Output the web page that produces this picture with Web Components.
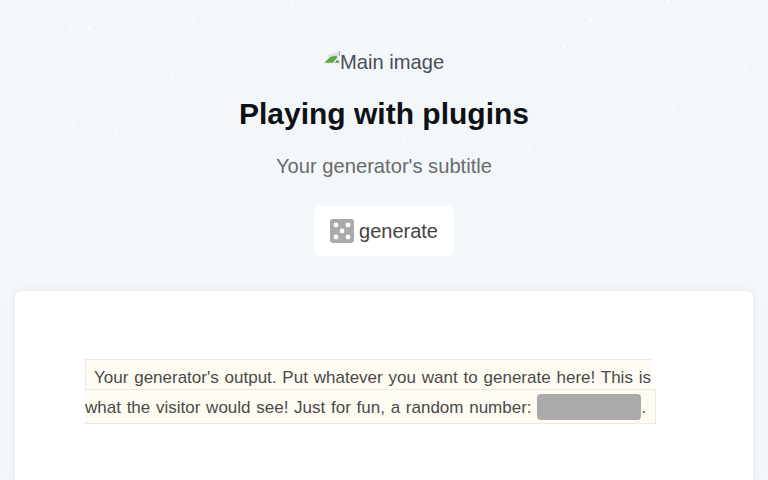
<!DOCTYPE html>
<html lang="en">
<head>
<meta charset="utf-8">
<title>Playing with plugins</title>
<style>
  html, body { margin: 0; height: 480px; overflow: hidden; background: #f3f7fa; }
  body { font-family: "Liberation Sans", Arial, sans-serif; color: #444; }
  .last-line { word-spacing: 1px; white-space: nowrap; }
</style>
</head>
<body>
<snow-field></snow-field>
<gen-hero heading="Playing with plugins" subtitle="Your generator's subtitle" alt="Main image">
  <dice-button>generate</dice-button>
</gen-hero>
<output-card>
  Your generator's output. Put whatever you want to generate here! This is <span class="last-line">what the visitor would see! Just for fun, a random number: <blur-slot></blur-slot>.</span>
</output-card>

<script>
// snow flakes sit on a free canvas behind the page
const flakes = [
  [53,14],[51,34],[71,29],[89,28],[193,22],[173,62],[162,75],[172,77],[235,58],[202,96],
  [22,82],[75,91],[123,109],[43,116],[73,126],[116,132],[146,130],[163,137],[45,150],
  [668,1],[696,9],[591,20],[531,43],[564,47],[525,54],[739,61],[745,70],[512,86],[673,106],
  [565,118],[614,143],[529,146],[292,2],[422,6],[470,38],[474,68],[453,84],[404,138],[413,50]
];

class SnowField extends HTMLElement {
  constructor() {
    super();
    this.attachShadow({ mode: 'open' });
  }
  connectedCallback() {
    const dots = flakes.map(([x, y]) => `<circle cx="${x}" cy="${y}" r="1.3"/>`).join('');
    this.shadowRoot.innerHTML = `
      <style>
        :host { position: absolute; left: 0; top: 0; width: 768px; height: 480px; z-index: 0; }
        svg { display: block; fill: #fff; }
      </style>
      <svg width="768" height="480" viewBox="0 0 768 480">${dots}</svg>
    `;
  }
}

class GenHero extends HTMLElement {
  constructor() {
    super();
    this.attachShadow({ mode: 'open' });
  }
  connectedCallback() {
    const heading = this.getAttribute('heading') || '';
    const subtitle = this.getAttribute('subtitle') || '';
    const alt = this.getAttribute('alt') || '';
    this.shadowRoot.innerHTML = `
      <style>
        :host {
          display: flex;
          flex-direction: column;
          align-items: center;
          position: relative;
          z-index: 1;
          padding-top: 50px;
        }
        .image {
          display: flex;
          width: 120px;
          height: 24px;
          font-size: 20.16px;
          line-height: 24px;
          color: #495057;
          white-space: nowrap;
          overflow: hidden;
        }
        .image svg { flex: none; display: block; margin-top: 1px; }
        h1 {
          margin: 20px 0 0;
          font-size: 30px;
          line-height: 40px;
          font-weight: 700;
          color: #0e1116;
        }
        p {
          margin: 18px 0 0;
          font-size: 20.16px;
          line-height: 28px;
          color: #6a6a6a;
        }
        .action { margin-top: 26px; }
      </style>
      <div class="image" role="img">
        <svg width="16" height="16" viewBox="0 0 16 16">
          <path d="M3.7 7 L5 3.5 L13 1.5 L15.5 0.5 V4 L13.6 6 L7 5.5 Z" fill="#d5def0"/>
          <path d="M0.3 11.7 L4 8 L7 5.5 L12 5 L13.6 6 L9 11.7 Z" fill="#5da83f"/>
          <path d="M10.7 11.7 L13.5 8.4 L15.7 11.7 Z" fill="#5f8f55"/>
          <path d="M15.5 0 V5" stroke="#a9aeb0" stroke-width="1" fill="none"/>
        </svg>
        <span>${alt}</span>
      </div>
      <h1>${heading}</h1>
      <p>${subtitle}</p>
      <div class="action"><slot></slot></div>
    `;
  }
}

class DiceButton extends HTMLElement {
  constructor() {
    super();
    this.attachShadow({ mode: 'open' });
  }
  connectedCallback() {
    this.shadowRoot.innerHTML = `
      <style>
        :host {
          display: flex;
          align-items: center;
          gap: 5px;
          height: 50px;
          padding: 0 16px;
          background: #fff;
          border-radius: 6px;
          font-size: 20px;
          color: #444;
          box-sizing: border-box;
        }
        svg { display: block; }
      </style>
      <svg width="24" height="24" viewBox="0 0 24 24">
        <rect width="24" height="24" rx="3" fill="#aaa"/>
        <g fill="#fff">
          <circle cx="6" cy="6" r="2.4"/><circle cx="18" cy="6" r="2.4"/>
          <circle cx="12" cy="12" r="2.4"/>
          <circle cx="6" cy="18" r="2.4"/><circle cx="18" cy="18" r="2.4"/>
        </g>
      </svg>
      <slot></slot>
    `;
  }
}

class OutputCard extends HTMLElement {
  constructor() {
    super();
    this.attachShadow({ mode: 'open' });
  }
  connectedCallback() {
    this.shadowRoot.innerHTML = `
      <style>
        :host {
          display: block;
          position: relative;
          z-index: 1;
          margin: 35px 15px 0;
          height: 189px;
          padding: 72px 102px 0 70px;
          box-sizing: border-box;
          background: #fff;
          border-radius: 8px 8px 0 0;
          box-shadow: 0 0 8px rgba(120, 130, 140, 0.12);
        }
        .text {
          font-size: 17px;
          line-height: 30px;
          text-align: justify;
          color: #4a4a4a;
        }
        .mark {
          padding: 8px 9px 6px 8px;
          background: #fffbf2;
          border: 1px solid #ebe8e1;
        }
      </style>
      <div class="text"><span class="mark"><slot></slot></span></div>
    `;
  }
}

class BlurSlot extends HTMLElement {
  constructor() {
    super();
    this.attachShadow({ mode: 'open' });
  }
  connectedCallback() {
    this.shadowRoot.innerHTML = `
      <style>
        :host {
          display: inline-block;
          width: 104px;
          height: 26px;
          vertical-align: -7px;
          background: #aaa;
          border-radius: 4px;
        }
      </style>
    `;
  }
}

customElements.define('snow-field', SnowField);
customElements.define('gen-hero', GenHero);
customElements.define('dice-button', DiceButton);
customElements.define('output-card', OutputCard);
customElements.define('blur-slot', BlurSlot);
</script>
</body>
</html>
